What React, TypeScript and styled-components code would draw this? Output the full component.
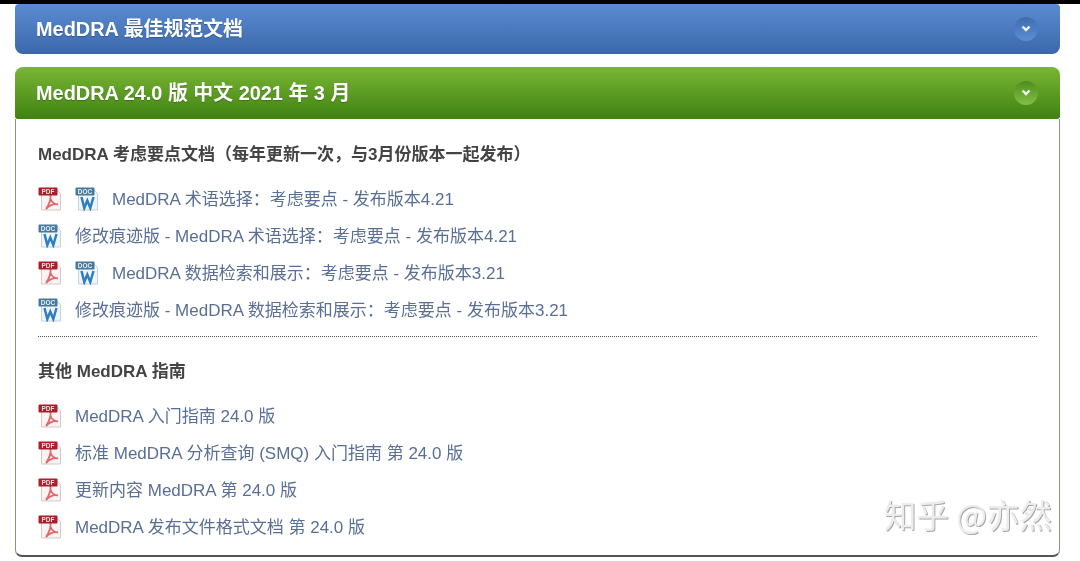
import styled, { createGlobalStyle } from "styled-components";

const GlobalStyle = createGlobalStyle`
  html, body {
    margin: 0;
    padding: 0;
    background: #fff;
  }
  body {
    font-family: "Liberation Sans", "Noto Sans CJK SC", sans-serif;
  }
`;

type IconKind = "pdf" | "word";
type DocLink = { icons: IconKind[]; label: string };

const considerationsTitle =
  "MedDRA 考虑要点文档\uFF08每年更新一次\uFF0C与3月份版本一起发布\uFF09";

const considerations: DocLink[] = [
  { icons: ["pdf", "word"], label: "MedDRA 术语选择\uFF1A考虑要点 - 发布版本4.21" },
  { icons: ["word"], label: "修改痕迹版 - MedDRA 术语选择\uFF1A考虑要点 - 发布版本4.21" },
  { icons: ["pdf", "word"], label: "MedDRA 数据检索和展示\uFF1A考虑要点 - 发布版本3.21" },
  { icons: ["word"], label: "修改痕迹版 - MedDRA 数据检索和展示\uFF1A考虑要点 - 发布版本3.21" },
];

const guides: DocLink[] = [
  { icons: ["pdf"], label: "MedDRA 入门指南 24.0 版" },
  { icons: ["pdf"], label: "标准 MedDRA 分析查询 (SMQ) 入门指南 第 24.0 版" },
  { icons: ["pdf"], label: "更新内容 MedDRA 第 24.0 版" },
  { icons: ["pdf"], label: "MedDRA 发布文件格式文档 第 24.0 版" },
];

const PdfIcon = () => (
  <svg width="24" height="24" viewBox="0 0 24 24">
    <path d="M3.500 1.500h14l5 5v16.500h-19z" fill="#faf3f3" stroke="#d8c8c8" />
    <path
      d="M8 22c3.500-5 5-10 4.500-14M8 22c4-4 8-5.500 12-4.500M12.500 12c1 2.500 3.500 5 7.500 5.500"
      fill="none"
      stroke="#e0686c"
      strokeWidth="1.800"
    />
    <rect x="0.500" y="0.500" width="19" height="8" rx="1" fill="#a81f2b" />
    <text x="10" y="6.800" textAnchor="middle" fontSize="6.500" fontWeight="700" fill="#f4dcdc" fontFamily="Liberation Sans">
      PDF
    </text>
  </svg>
);

const WordIcon = () => (
  <svg width="24" height="24" viewBox="0 0 24 24">
    <path d="M3.500 1.500h14l5 5v16.500h-19z" fill="#f0f5fa" stroke="#c4d2de" />
    <path d="M6.500 10l2.800 11 3-7.500 3 7.500L18.500 10" fill="none" stroke="#2f7fc0" strokeWidth="2.500" />
    <rect x="0.500" y="0.500" width="19" height="8" rx="1" fill="#47799c" />
    <text x="10" y="6.800" textAnchor="middle" fontSize="6.500" fontWeight="700" fill="#e6f0f6" fontFamily="Liberation Sans">
      DOC
    </text>
  </svg>
);

const Chevron = () => (
  <svg width="10" height="8" viewBox="0 0 10 8">
    <path d="M1.500 1.500 5 5l3.500-3.500" fill="none" stroke="#f4f8f0" strokeWidth="2.400" />
  </svg>
);

const App = () => {
  const renderLinks = (links: DocLink[]) => (
    <LinkList>
      {links.map((link) => (
        <LinkRow key={link.label}>
          {link.icons.map((kind) => (
            <IconSlot key={kind}>{kind === "pdf" ? <PdfIcon /> : <WordIcon />}</IconSlot>
          ))}
          <DocAnchor>{link.label}</DocAnchor>
        </LinkRow>
      ))}
    </LinkList>
  );

  return (
    <Page>
      <GlobalStyle />
      <AccordionBar $tone="blue">
        <BarTitle>MedDRA 最佳规范文档</BarTitle>
        <BarToggle $tone="blue">
          <Chevron />
        </BarToggle>
      </AccordionBar>

      <OpenSection>
        <AccordionBar $tone="green" $open>
          <BarTitle>MedDRA 24.0 版 中文 2021 年 3 月</BarTitle>
          <BarToggle $tone="green">
            <Chevron />
          </BarToggle>
        </AccordionBar>
        <PanelBody>
          <SectionTitle>{considerationsTitle}</SectionTitle>
          {renderLinks(considerations)}
          <DottedRule />
          <SectionTitle>其他 MedDRA 指南</SectionTitle>
          {renderLinks(guides)}
        </PanelBody>
      </OpenSection>

      <Watermark>知乎 @亦然</Watermark>
    </Page>
  );
};

export default App;

// page
const Page = styled.div`
  position: relative;
  box-sizing: border-box;
  width: 1080px;
  height: 561px;
  overflow: hidden;
  padding: 0 20px 0 15px;
  border-top: 4px solid #000;
  display: flex;
  flex-direction: column;
  gap: 13px;
  filter: blur(0.45px);
`;

// coloured accordion bars
const AccordionBar = styled.div<{ $tone: "blue" | "green"; $open?: boolean }>`
  box-sizing: border-box;
  height: ${(p) => (p.$open ? "52px" : "50px")};
  display: flex;
  align-items: center;
  justify-content: space-between;
  padding: 0 22px 0 21px;
  border-radius: ${(p) => (p.$open ? "8px 8px 3px 3px" : "4px 4px 8px 8px")};
  background: ${(p) =>
    p.$tone === "blue"
      ? "linear-gradient(#5a8bd2, #3c68aa)"
      : "linear-gradient(#7ab635, #3f8212)"};
`;

const BarTitle = styled.span`
  padding-bottom: 4px;
  color: #fff;
  font-size: 19.9px;
  font-weight: 700;
  text-shadow: 0 1px 1px rgba(0, 0, 0, 0.25);
`;

const BarToggle = styled.span<{ $tone: "blue" | "green" }>`
  width: 24px;
  height: 24px;
  border-radius: 50%;
  display: flex;
  align-items: center;
  justify-content: center;
  background: ${(p) =>
    p.$tone === "blue"
      ? "linear-gradient(#3f6cad, #5a8ed6)"
      : "linear-gradient(#4f8c1e, #82c046)"};
`;

// expanded panel
const OpenSection = styled.div`
  display: flex;
  flex-direction: column;
`;

const PanelBody = styled.div`
  box-sizing: border-box;
  height: 438px;
  padding: 25px 22px 0;
  border: 1px solid #8a9a6c;
  border-top: none;
  border-bottom: 2px solid #555;
  border-radius: 0 0 7px 7px;
  background: #fff;
`;

const SectionTitle = styled.h3`
  margin: 0;
  height: 22px;
  line-height: 22px;
  color: #444;
  font-size: 17px;
  font-weight: 700;
`;

const LinkList = styled.div`
  margin-top: 21px;
  display: flex;
  flex-direction: column;
  gap: 13px;
`;

const LinkRow = styled.div`
  height: 24px;
  display: flex;
  align-items: center;
`;

const IconSlot = styled.span`
  width: 24px;
  height: 24px;
  margin-right: 13px;
  flex: none;
`;

const DocAnchor = styled.a`
  padding-top: 2px;
  color: #5a6f95;
  font-size: 17px;
  line-height: 24px;
  cursor: pointer;
`;

const DottedRule = styled.div`
  margin: 14px 0 24px;
  border-top: 1px dotted #555;
`;

// site watermark over the panel
const Watermark = styled.div`
  position: absolute;
  left: 884px;
  top: 487px;
  color: #ececec;
  font-family: "Noto Sans CJK SC", sans-serif;
  font-size: 32.5px;
  line-height: 46px;
  white-space: nowrap;
  text-shadow: 1px 1px 0 #a8a8a8;
`;
